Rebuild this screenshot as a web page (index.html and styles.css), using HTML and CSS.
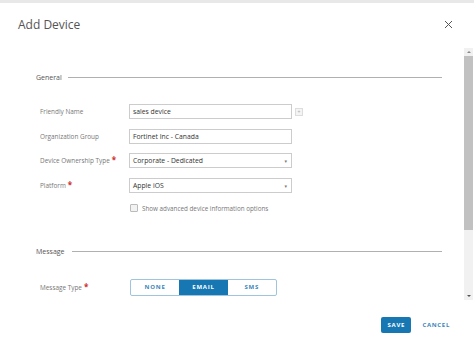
FILE: index.html
```html
<!DOCTYPE html>
<html>
<head>
<meta charset="utf-8">
<link rel="stylesheet" href="styles.css">
</head>
<body>
<div class="topstrip"></div>
<div class="header">
  <div class="title">Add Device</div>
  <svg class="close" width="9" height="9" viewBox="0 0 9 9"><path d="M1 1 L8 8 M8 1 L1 8" stroke="#555" stroke-width="1" fill="none"/></svg>
</div>
<div class="main">
  <div class="content">
    <div class="section-head"><span>General</span><div class="rule"></div></div>
    <div class="form">
      <div class="label">Friendly Name</div>
      <div class="input">sales device</div>
      <div class="plus">+</div>

      <div class="label">Organization Group</div>
      <div class="input">Fortinet Inc - Canada</div>
      <div></div>

      <div class="label">Device Ownership Type<span class="req">*</span></div>
      <div class="input select"><span>Corporate - Dedicated</span><span class="caret">▾</span></div>
      <div></div>

      <div class="label">Platform<span class="req">*</span></div>
      <div class="input select"><span>Apple iOS</span><span class="caret">▾</span></div>
      <div></div>

      <div class="checkrow"><span class="checkbox"></span><span>Show advanced device information options</span></div>
    </div>
    <div class="section-head msg"><span>Message</span><div class="rule"></div></div>
    <div class="form msgform">
      <div class="label">Message Type<span class="req">*</span></div>
      <div class="segmented">
        <div class="seg">NONE</div>
        <div class="seg active">EMAIL</div>
        <div class="seg">SMS</div>
      </div>
    </div>
  </div>
  <div class="scrollbar">
    <div class="arrow up"></div>
    <div class="track"><div class="thumb"></div></div>
    <div class="arrow down"></div>
  </div>
</div>
<div class="footer">
  <div class="btn save">SAVE</div>
  <div class="btn cancel">CANCEL</div>
</div>
</body>
</html>
```

FILE: styles.css
```css
html, body {
  margin: 0;
  padding: 0;
  background: #fff;
}
body {
  width: 474px;
  height: 352px;
  overflow: hidden;
  font-family: "Open Sans", "DejaVu Sans", sans-serif;
  color: #555;
}
.topstrip {
  height: 3px;
  background: #e8e8e8;
}
.header {
  height: 45px;
  box-sizing: border-box;
  padding: 0 21px 3px 18px;
  display: flex;
  align-items: center;
  justify-content: space-between;
}
.title {
  font-size: 12px;
  color: #555;
}
.close {
  display: block;
}
.main {
  height: 252px;
  display: flex;
}
.content {
  flex: 1;
  padding: 24px 22px 0 36px;
  overflow: hidden;
}
.section-head {
  display: flex;
  align-items: center;
  gap: 6px;
  height: 10px;
  font-size: 7px;
  color: #555;
}
.section-head.msg {
  margin-top: 34px;
  gap: 7px;
}
.rule {
  flex: 1;
  height: 1px;
  background: #b0b0b0;
}
.form {
  margin-top: 22px;
  padding-left: 4px;
  display: grid;
  grid-template-columns: 89px 163px auto;
  row-gap: 9.7px;
  align-items: center;
}
.label {
  font-size: 6.4px;
  color: #777;
}
.req {
  color: #d0302a;
  font-size: 8px;
  font-weight: bold;
  line-height: 6px;
  margin-left: 2px;
}
.input {
  height: 15px;
  box-sizing: border-box;
  border: 1px solid #ccc;
  padding: 0 3px;
  font-size: 6.8px;
  color: #333;
  display: flex;
  align-items: center;
  justify-content: space-between;
}
.caret {
  font-size: 5px;
  color: #777;
  margin-right: 1px;
}
.plus {
  margin-left: 3px;
  width: 8px;
  height: 8px;
  box-sizing: border-box;
  border: 1px solid #ddd;
  background: #f4f4f4;
  font-size: 5px;
  line-height: 6px;
  text-align: center;
  color: #aaa;
}
.checkrow {
  grid-column: 2 / 4;
  margin-top: 1px;
  display: flex;
  align-items: center;
  gap: 4px;
  padding-left: 1px;
  font-size: 6.3px;
  color: #777;
}
.checkbox {
  width: 8px;
  height: 8px;
  box-sizing: border-box;
  border: 1px solid #bbb;
  border-radius: 1px;
  background: #f2f2f2;
}
.msgform {
  margin-top: 22px;
}
.segmented {
  grid-column: 2 / 4;
  margin-left: 1px;
  display: flex;
  width: 147px;
  height: 17px;
  box-sizing: border-box;
  border: 1px solid #9fc5de;
  border-radius: 2px;
  overflow: hidden;
}
.seg {
  flex: 1;
  display: flex;
  align-items: center;
  justify-content: center;
  font-size: 6px;
  font-weight: bold;
  letter-spacing: 0.8px;
  color: #3b86bb;
}
.seg.active {
  background: #1777b3;
  color: #fff;
}
.scrollbar {
  width: 9px;
  margin-right: 1px;
  display: flex;
  flex-direction: column;
  background: #f1f1f1;
}
.arrow {
  height: 8px;
  display: flex;
  align-items: center;
  justify-content: center;
}
.arrow::before {
  content: "";
  border-left: 2px solid transparent;
  border-right: 2px solid transparent;
}
.arrow.up::before {
  border-bottom: 2px solid #888;
}
.arrow.down::before {
  border-top: 2px solid #555;
}
.track {
  flex: 1;
}
.thumb {
  height: 174px;
  background: #c1c1c1;
}
.footer {
  height: 52px;
  box-sizing: border-box;
  display: flex;
  justify-content: flex-end;
  align-items: flex-start;
  padding: 17px 24px 0 0;
  gap: 11px;
}
.btn {
  height: 16px;
  display: flex;
  align-items: center;
  justify-content: center;
  font-size: 6px;
  font-weight: bold;
  letter-spacing: 0.7px;
}
.save {
  width: 30px;
  background: #1777b3;
  color: #fff;
  border-radius: 2px;
}
.cancel {
  color: #3b86bb;
}
```
